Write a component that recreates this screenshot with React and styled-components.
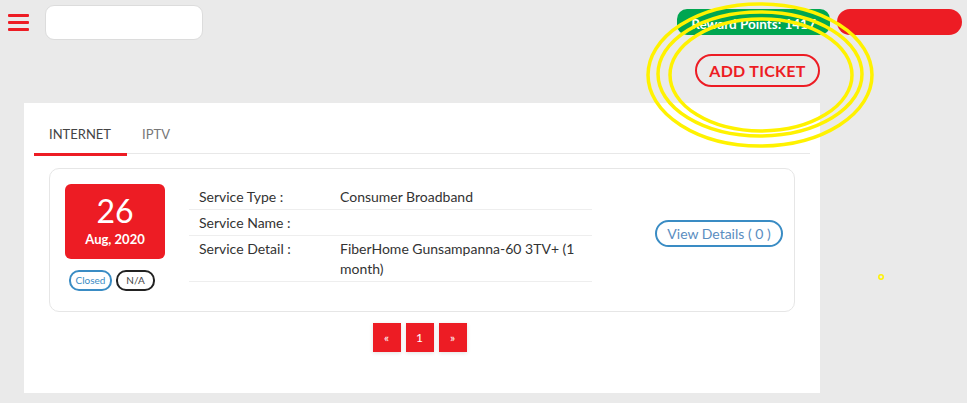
import React, { useState } from "react";
import styled, { createGlobalStyle } from "styled-components";

const RED = "#ed1c24";
const BLUE = "#3a8cc4";

const GlobalStyle = createGlobalStyle`
  html, body {
    margin: 0;
    padding: 0;
    background-color: #eaeaea;
    font-family: Lato, "Open Sans", sans-serif;
    color: #333;
  }
  * {
    box-sizing: border-box;
  }
`;

const services = [
  { label: "Service Type :", value: "Consumer Broadband" },
  { label: "Service Name :", value: "" },
  { label: "Service Detail :", value: "FiberHome Gunsampanna-60 3TV+ (1 month)" },
];

function App() {
  const [tab, setTab] = useState("INTERNET");

  return (
    <Page>
      <GlobalStyle />
      <Header>
        <MenuButton aria-label="menu">
          <span />
          <span />
          <span />
        </MenuButton>
        <SearchBox />
        <HeaderRight>
          <RewardPill>Reward Points: 1417</RewardPill>
          <UserPill />
        </HeaderRight>
      </Header>

      <ActionRow>
        <AddTicketButton>ADD TICKET</AddTicketButton>
      </ActionRow>

      <Panel>
        <TabBar>
          {["INTERNET", "IPTV"].map((t) => (
            <Tab key={t} active={tab === t} onClick={() => setTab(t)}>
              {t}
            </Tab>
          ))}
        </TabBar>

        <TicketCard>
          <DateColumn>
            <DateBox>
              <Day>26</Day>
              <MonthYear>Aug, 2020</MonthYear>
            </DateBox>
            <Badges>
              <Badge color={BLUE} width={43}>Closed</Badge>
              <Badge color="#222" width={39}>N/A</Badge>
            </Badges>
          </DateColumn>

          <ServiceTable>
            {services.map((s) => (
              <ServiceRow key={s.label}>
                <Label>{s.label}</Label>
                <Value>{s.value}</Value>
              </ServiceRow>
            ))}
          </ServiceTable>

          <ViewDetailsButton>View Details ( 0 )</ViewDetailsButton>
        </TicketCard>

        <Pagination>
          <PageButton>«</PageButton>
          <PageButton>1</PageButton>
          <PageButton>»</PageButton>
        </Pagination>
      </Panel>

      <Annotation width="967" height="403" viewBox="0 0 967 403">
        <ellipse cx="760" cy="75" rx="112" ry="71" />
        <ellipse cx="760" cy="74" rx="102" ry="62" />
        <ellipse cx="761" cy="75" rx="91" ry="56" />
        <circle cx="881" cy="277" r="2.2" strokeWidth="1.5" />
      </Annotation>
    </Page>
  );
}

export default App;

const Page = styled.div`
  position: relative;
  width: 967px;
  height: 403px;
  overflow: hidden;
`;

const Header = styled.div`
  display: flex;
  align-items: flex-start;
  padding: 5px 5px 0 8px;
`;

const MenuButton = styled.button`
  display: flex;
  flex-direction: column;
  gap: 4px;
  width: 21px;
  margin-top: 9px;
  padding: 0;
  border: none;
  background: none;

  span {
    display: block;
    height: 3px;
    width: 21px;
    background-color: ${RED};
    border-radius: 1px;
  }
`;

const SearchBox = styled.div`
  width: 158px;
  height: 35px;
  margin-left: 16px;
  background-color: #fff;
  border: 1px solid #dcdcdc;
  border-radius: 9px;
`;

const HeaderRight = styled.div`
  display: flex;
  gap: 7px;
  margin-left: auto;
  margin-top: 4px;
`;

const RewardPill = styled.div`
  width: 153px;
  height: 26px;
  padding-top: 6px;
  border-radius: 10px;
  background-color: #00a651;
  color: #fff;
  font-size: 13.5px;
  font-weight: 700;
  text-align: center;
  line-height: 18px;
  white-space: nowrap;
`;

const UserPill = styled.div`
  width: 125px;
  height: 26px;
  border-radius: 13px;
  background-color: ${RED};
`;

const ActionRow = styled.div`
  display: flex;
  justify-content: flex-end;
  padding-right: 147px;
  margin-top: 14px;
`;

const AddTicketButton = styled.button`
  width: 125px;
  height: 33px;
  border: 2px solid ${RED};
  border-radius: 17px;
  background: transparent;
  color: ${RED};
  font-family: Lato, sans-serif;
  font-size: 16px;
  font-weight: 700;
  letter-spacing: 0.3px;
`;

const Panel = styled.div`
  width: 796px;
  height: 290px;
  margin: 16px 0 0 24px;
  padding: 10px;
  background-color: #fff;
`;

const TabBar = styled.div`
  display: flex;
  border-bottom: 1px solid #e8e8e8;
`;

const Tab = styled.div`
  padding: 12px 16px 10px 15px;
  margin-bottom: -3px;
  border-bottom: 3px solid ${(p) => (p.active ? RED : "transparent")};
  color: ${(p) => (p.active ? "#444" : "#777")};
  font-size: 13px;
  line-height: 18px;
  cursor: pointer;
`;

const TicketCard = styled.div`
  display: flex;
  align-items: flex-start;
  height: 144px;
  margin: 14px 15px 0;
  padding: 15px 11px 15px 15px;
  border: 1px solid #e6e6e6;
  border-radius: 10px;
`;

const DateColumn = styled.div`
  display: flex;
  flex-direction: column;
  width: 100px;
`;

const DateBox = styled.div`
  display: flex;
  flex-direction: column;
  align-items: center;
  height: 75px;
  padding-top: 7px;
  border-radius: 6px;
  background-color: ${RED};
  color: #fff;
`;

const Day = styled.div`
  font-size: 32px;
  line-height: 39px;
`;

const MonthYear = styled.div`
  font-size: 13px;
  font-weight: 700;
  line-height: 18px;
`;

const Badges = styled.div`
  display: flex;
  gap: 4px;
  margin: 11px 0 0 4px;
`;

const Badge = styled.span`
  width: ${(p) => p.width}px;
  height: 21px;
  border: 2px solid ${(p) => p.color};
  border-radius: 10px;
  color: ${(p) => (p.color === BLUE ? BLUE : "#444")};
  font-size: 10px;
  line-height: 17px;
  text-align: center;
`;

const ServiceTable = styled.div`
  width: 403px;
  margin-left: 24px;
`;

const ServiceRow = styled.div`
  display: flex;
  border-bottom: 1px solid #eeeeee;
  font-size: 14px;
  line-height: 20px;
`;

const Label = styled.div`
  flex: 0 0 141px;
  padding: 3px 0 2px 10px;
`;

const Value = styled.div`
  flex: 1;
  padding: 3px 10px 2px;
`;

const ViewDetailsButton = styled.button`
  width: 128px;
  height: 27px;
  margin: 36px 0 0 auto;
  border: 2px solid ${BLUE};
  border-radius: 14px;
  background: #fff;
  color: #5a8dbf;
  font-family: Lato, sans-serif;
  font-size: 14px;
`;

const Pagination = styled.div`
  display: flex;
  justify-content: center;
  gap: 5px;
  margin-top: 11px;
  padding-right: 5px;
`;

const PageButton = styled.div`
  width: 28px;
  height: 29px;
  background-color: ${RED};
  color: #fff;
  font-size: 12px;
  line-height: 29px;
  text-align: center;
  box-shadow: 0 1px 4px rgba(0, 0, 0, 0.12);
`;

const Annotation = styled.svg`
  position: absolute;
  top: 0;
  left: 0;
  pointer-events: none;
  fill: none;
  stroke: #fff200;
  stroke-width: 3.5;
`;
